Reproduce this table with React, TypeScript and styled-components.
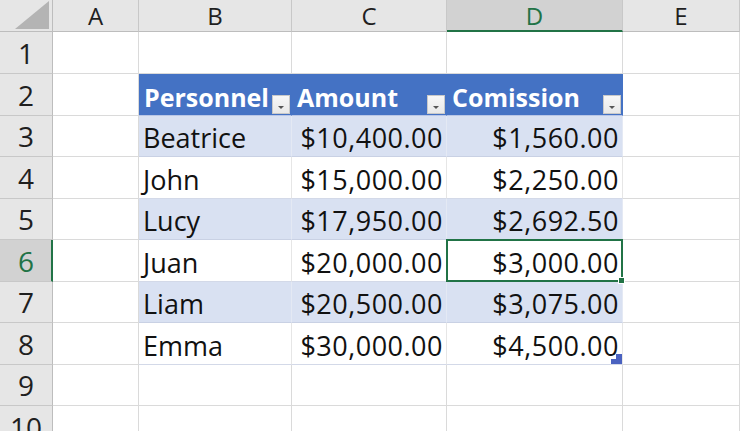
import React from "react";
import styled, { createGlobalStyle, css } from "styled-components";

const Global = createGlobalStyle`
  html, body { margin: 0; padding: 0; background: #ffffff; overflow: hidden; }
  body { font-family: "Open Sans", "Noto Sans", sans-serif; }
`;

const GREEN = "#217346";
const GRID = "#dadada";

const COLS = [53, 86, 153, 155, 176, 117];
const ROWS = [32, 42, 42, 41, 42, 41, 42, 41, 42, 41, 42];

const Sheet = styled.div`
  display: grid;
  width: 740px;
  height: 431px;
  overflow: hidden;
  grid-template-columns: ${COLS.map((c) => c + "px").join(" ")};
  grid-template-rows: ${ROWS.map((r) => r + "px").join(" ")};
`;

const Corner = styled.div`
  background: #e6e6e6;
  border-right: 1px solid #bdbdbd;
  border-bottom: 1px solid #bdbdbd;
  box-sizing: border-box;
  display: flex;
  align-items: flex-end;
  justify-content: flex-end;
  padding: 0 3px 2px 0;
`;

const ColHead = styled.div<{ $sel?: boolean }>`
  box-sizing: border-box;
  background: ${(p) => (p.$sel ? "#d2d2d2" : "#e6e6e6")};
  border-right: 1px solid #c8c8c8;
  border-bottom: ${(p) => (p.$sel ? `2px solid ${GREEN}` : "1px solid #bdbdbd")};
  color: ${(p) => (p.$sel ? GREEN : "#1f1f1f")};
  font-size: 24px;
  display: flex;
  align-items: center;
  justify-content: center;
  padding-bottom: ${(p) => (p.$sel ? "0" : "1px")};
`;

const RowHead = styled.div<{ $sel?: boolean }>`
  box-sizing: border-box;
  background: ${(p) => (p.$sel ? "#d2d2d2" : "#e6e6e6")};
  border-bottom: 1px solid #c8c8c8;
  border-right: ${(p) => (p.$sel ? `2px solid ${GREEN}` : "1px solid #bdbdbd")};
  color: ${(p) => (p.$sel ? GREEN : "#1f1f1f")};
  font-size: 28px;
  display: flex;
  align-items: center;
  justify-content: center;
  padding-left: ${(p) => (p.$sel ? "1px" : "0")};
`;

type Kind = "plain" | "head" | "band" | "row";

const Cell = styled.div<{ $kind: Kind; $right?: boolean; $sel?: boolean }>`
  position: relative;
  box-sizing: border-box;
  border-right: 1px solid ${GRID};
  border-bottom: 1px solid ${GRID};
  font-size: 27px;
  line-height: 34px;
  color: #111111;
  display: flex;
  align-items: flex-end;
  justify-content: ${(p) => (p.$right ? "flex-end" : "flex-start")};
  padding: 0 ${(p) => (p.$right ? "3px" : "4px")} 1px 4px;
  letter-spacing: ${(p) => (p.$right ? "0.5px" : "0")};
  white-space: nowrap;
  ${(p) =>
    p.$kind === "head" &&
    css`
      background: #4472c4;
      color: #ffffff;
      font-size: 25px;
      font-weight: 700;
      border-right-color: #4472c4;
      border-bottom-color: #b9c6e6;
      justify-content: space-between;
      padding: 0 1px 1px 5px;
    `}
  ${(p) =>
    p.$kind === "band" &&
    css`
      background: #d9e1f2;
      border-right-color: #e4e9f4;
      border-bottom-color: #c9d1e4;
    `}
  ${(p) =>
    p.$kind === "row" &&
    css`
      border-right-color: #e6e6e6;
      border-bottom-color: #d3d9e8;
    `}
  ${(p) =>
    p.$sel &&
    css`
      &::after {
        content: "";
        position: absolute;
        left: -1px;
        top: -1px;
        right: -1px;
        bottom: -1px;
        border: 2px solid ${GREEN};
        pointer-events: none;
      }
      &::before {
        content: "";
        position: absolute;
        right: -3px;
        bottom: -3px;
        width: 5px;
        height: 5px;
        background: ${GREEN};
        border: 1px solid #ffffff;
        z-index: 2;
      }
    `}
`;

const HeadLabel = styled.span`
  line-height: 34px;
`;

const FilterBtn = styled.span`
  box-sizing: border-box;
  width: 18px;
  height: 19px;
  flex: none;
  background: linear-gradient(#f7f7f7, #e9e9e9);
  border: 1px solid #c9c9c9;
  display: flex;
  align-items: flex-end;
  justify-content: center;
  padding-bottom: 4px;
`;

const ResizeHandle = styled.svg`
  position: absolute;
  right: 0;
  bottom: 0;
`;

const Triangle = () => (
  <svg width="34" height="28" viewBox="0 0 34 28">
    <polygon points="34,0 34,28 0,28" fill="#b4b4b4" />
  </svg>
);

const Arrow = () => (
  <svg width="6" height="3" viewBox="0 0 6 3">
    <polygon points="0,0 6,0 3,3" fill="#555" />
  </svg>
);

type Row = { name: string; amount: string; com: string };
const DATA: Row[] = [
  { name: "Beatrice", amount: "$10,400.00", com: "$1,560.00" },
  { name: "John", amount: "$15,000.00", com: "$2,250.00" },
  { name: "Lucy", amount: "$17,950.00", com: "$2,692.50" },
  { name: "Juan", amount: "$20,000.00", com: "$3,000.00" },
  { name: "Liam", amount: "$20,500.00", com: "$3,075.00" },
  { name: "Emma", amount: "$30,000.00", com: "$4,500.00" },
];

const LETTERS = ["A", "B", "C", "D", "E"];

export default function App() {
  const cells: React.ReactNode[] = [];
  cells.push(
    <Corner key="corner">
      <Triangle />
    </Corner>
  );
  LETTERS.forEach((l) =>
    cells.push(
      <ColHead key={"h" + l} $sel={l === "D"}>
        {l}
      </ColHead>
    )
  );

  for (let r = 1; r <= 10; r++) {
    cells.push(
      <RowHead key={"r" + r} $sel={r === 6}>
        {r}
      </RowHead>
    );
    cells.push(<Cell key={`A${r}`} $kind="plain" />);
    if (r === 2) {
      ["Personnel", "Amount", "Comission"].forEach((t) =>
        cells.push(
          <Cell key={`hd${t}`} $kind="head">
            <HeadLabel>{t}</HeadLabel>
            <FilterBtn>
              <Arrow />
            </FilterBtn>
          </Cell>
        )
      );
    } else if (r >= 3 && r <= 8) {
      const d = DATA[r - 3];
      const kind: Kind = r % 2 === 1 ? "band" : "row";
      cells.push(
        <Cell key={`B${r}`} $kind={kind}>
          {d.name}
        </Cell>
      );
      cells.push(
        <Cell key={`C${r}`} $kind={kind} $right>
          {d.amount}
        </Cell>
      );
      cells.push(
        <Cell key={`D${r}`} $kind={kind} $right $sel={r === 6}>
          {d.com}
          {r === 8 && (
            <ResizeHandle width="11" height="10" viewBox="0 0 11 10">
              <polygon points="11,0 11,10 0,10 0,5 5,5 5,0" fill="#4a62c0" />
            </ResizeHandle>
          )}
        </Cell>
      );
    } else {
      cells.push(<Cell key={`B${r}`} $kind="plain" />);
      cells.push(<Cell key={`C${r}`} $kind="plain" />);
      cells.push(<Cell key={`D${r}`} $kind="plain" />);
    }
    cells.push(<Cell key={`E${r}`} $kind="plain" />);
  }

  return (
    <>
      <Global />
      <Sheet>{cells}</Sheet>
    </>
  );
}
